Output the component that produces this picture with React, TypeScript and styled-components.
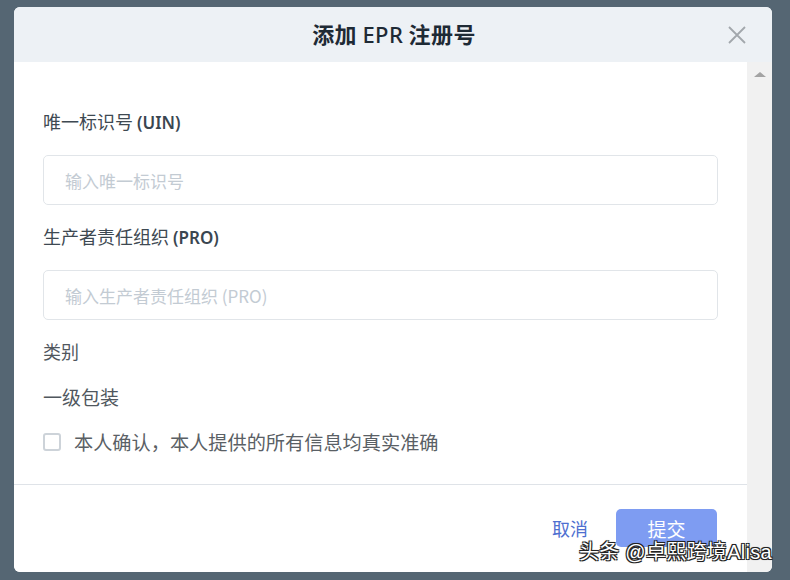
import React from "react";
import styled, { createGlobalStyle } from "styled-components";

const Global = createGlobalStyle`
  html, body { margin: 0; padding: 0; }
  body {
    width: 790px; height: 580px; overflow: hidden;
    background: #556673;
    font-family: "Noto Sans", "Noto Sans CJK SC", sans-serif;
  }
`;

const Backdrop = styled.div`
  width: 790px;
  height: 580px;
  box-sizing: border-box;
  padding: 7px 18px 8px 14px;
  display: flex;
  position: relative;
`;

const Modal = styled.div`
  flex: 1;
  display: flex;
  flex-direction: column;
  background: #fff;
  border-radius: 6px;
  overflow: hidden;
`;

const Header = styled.div`
  height: 55px;
  flex: none;
  box-sizing: border-box;
  padding-bottom: 4px;
  background: #edf1f5;
  display: flex;
  align-items: center;
  justify-content: center;
  position: relative;
`;

const Title = styled.h2`
  margin: 0 0 0 2px;
  font-size: 22px;
  font-weight: 700;
  color: #1e2a35;
  font-family: "Noto Sans CJK SC", sans-serif;
  letter-spacing: 0.4px;
`;

const Latin = styled.span`
  font-family: "Noto Sans", "Noto Sans CJK SC", sans-serif;
  font-weight: 500;
`;

const CloseButton = styled.button`
  position: absolute;
  right: 24px;
  top: 17px;
  width: 22px;
  height: 22px;
  padding: 0;
  border: 0;
  background: transparent;
  display: flex;
  align-items: center;
  justify-content: center;
`;

const Scroller = styled.div`
  flex: 1;
  display: flex;
  min-height: 0;
`;

const Content = styled.div`
  flex: 1;
  display: flex;
  flex-direction: column;
  background: #fff;
`;

const Track = styled.div`
  width: 25px;
  flex: none;
  background: #f1f1f1;
  display: flex;
  justify-content: center;
  padding-top: 10px;
  box-sizing: border-box;
`;

const Arrow = styled.div`
  width: 0;
  height: 0;
  border-left: 6px solid transparent;
  border-right: 6px solid transparent;
  border-bottom: 5px solid #a3a3a3;
`;

const Form = styled.div`
  padding: 47px 29px 28px 29px;
  display: flex;
  flex-direction: column;
`;

const Field = styled.div`
  display: flex;
  flex-direction: column;
  gap: 20px;
  margin-bottom: 19px;
`;

const Label = styled.label`
  font-size: 18px;
  line-height: 24px;
  color: #3e4952;
  font-family: "Noto Sans CJK SC", sans-serif;
`;

const Code = styled.b`
  font-family: "Noto Sans", "Noto Sans CJK SC", sans-serif;
  font-weight: 600;
  font-size: 17px;
  color: #3a4650;
`;

const Input = styled.input`
  height: 50px;
  box-sizing: border-box;
  border: 1px solid #e1e5e9;
  border-radius: 5px;
  padding: 0 21px;
  font-size: 17px;
  font-family: "Noto Sans CJK SC", sans-serif;
  outline: none;
  &::placeholder { color: #c3cbd3; }
`;

const Plain = styled.div<{ $size: number; $gap: number }>`
  font-size: ${(p) => p.$size}px;
  line-height: 24px;
  color: #50575e;
  font-family: "Noto Sans CJK SC", sans-serif;
  margin-bottom: ${(p) => p.$gap}px;
`;

const CheckRow = styled.label`
  display: flex;
  align-items: center;
  gap: 13px;
  height: 28px;
`;

const Box = styled.span`
  width: 18px;
  height: 18px;
  box-sizing: border-box;
  border: 2px solid #cdd3d9;
  border-radius: 3px;
  flex: none;
`;

const CheckText = styled.span`
  font-size: 19.2px;
  color: #5a6065;
  font-family: "Noto Sans CJK SC", sans-serif;
`;

const Divider = styled.hr`
  margin: 0;
  border: 0;
  border-top: 1px solid #dfe3e8;
`;

const Footer = styled.div`
  display: flex;
  justify-content: flex-end;
  align-items: center;
  gap: 28px;
  padding: 24px 30px 0 0;
`;

const Cancel = styled.button`
  border: 0;
  background: transparent;
  padding: 0;
  font-size: 18px;
  color: #4e6fd0;
  font-family: "Noto Sans CJK SC", sans-serif;
`;

const Submit = styled.button`
  width: 101px;
  height: 38px;
  border: 0;
  border-radius: 5px;
  background: #7e9cf2;
  color: #fff;
  font-size: 19px;
  font-family: "Noto Sans CJK SC", sans-serif;
`;

const Watermark = styled.div`
  position: absolute;
  right: 18px;
  top: 539px;
  font-size: 20px;
  line-height: 26px;
  color: #fff;
  letter-spacing: 0.3px;
  font-family: "Liberation Sans", "Noto Sans CJK SC", sans-serif;
  text-shadow: -1px -1px 0 #222, 1px -1px 0 #222, -1px 1px 0 #222, 1px 1px 0 #222, 0 0 2px #000;
`;

export default function App() {
  return (
    <>
      <Global />
      <Backdrop>
        <Modal>
          <Header>
            <Title>
              添加 <Latin>EPR</Latin> 注册号
            </Title>
            <CloseButton aria-label="关闭">
              <svg width="20" height="20" viewBox="0 0 20 20">
                <path d="M2 2 L18 18 M18 2 L2 18" stroke="#a2a7ac" strokeWidth="1.8" fill="none" />
              </svg>
            </CloseButton>
          </Header>
          <Scroller>
            <Content>
              <Form>
                <Field>
                  <Label>
                    唯一标识号 <Code>(UIN)</Code>
                  </Label>
                  <Input placeholder="输入唯一标识号" />
                </Field>
                <Field>
                  <Label>
                    生产者责任组织 <Code>(PRO)</Code>
                  </Label>
                  <Input placeholder="输入生产者责任组织 (PRO)" />
                </Field>
                <Plain $size={18} $gap={22}>类别</Plain>
                <Plain $size={19} $gap={19}>一级包装</Plain>
                <CheckRow>
                  <Box />
                  <CheckText>本人确认，本人提供的所有信息均真实准确</CheckText>
                </CheckRow>
              </Form>
              <Divider />
              <Footer>
                <Cancel>取消</Cancel>
                <Submit>提交</Submit>
              </Footer>
            </Content>
            <Track>
              <Arrow />
            </Track>
          </Scroller>
        </Modal>
        <Watermark>头条 @卓熙跨境Alisa</Watermark>
      </Backdrop>
    </>
  );
}
